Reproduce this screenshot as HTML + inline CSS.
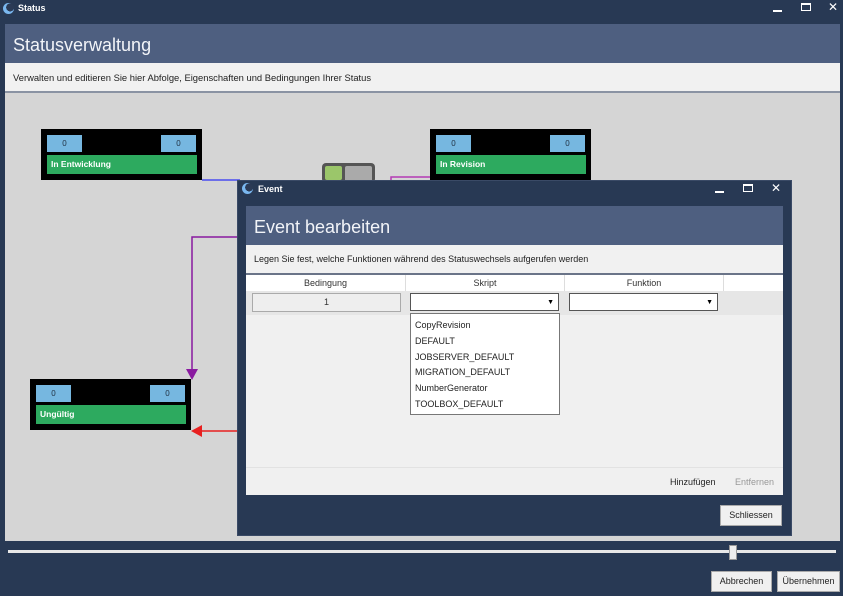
<!DOCTYPE html>
<html><head><meta charset="utf-8"><style>
*{box-sizing:border-box;margin:0;padding:0}
body{width:843px;height:596px;background:#283954;font-family:"Liberation Sans",sans-serif;position:relative;overflow:hidden;font-size:9px}
.a{position:absolute}
.node{position:absolute;background:#000;width:161px;height:51px}
.num{position:absolute;background:#76b7e0;width:35px;height:17px;font-size:8px;text-align:center;line-height:17px;color:#234}
.grn{position:absolute;background:#2daa5f;color:#fff;font-weight:bold;font-size:8.5px;line-height:19px;padding-left:4px;height:19px;width:150px}
.btn{position:absolute;background:#f0f0f0;border:1px solid #aaa;font-size:9px;text-align:center;line-height:19px;color:#222}
.hdr{position:absolute;background:#4e5f80;color:#f2f4f8;font-size:18px}
.ctl{position:absolute;color:#fff;font-size:12px}
</style></head><body>
<div class="a" style="left:3px;top:3px;width:11px;height:11px;border-radius:50%;background:radial-gradient(circle at 65% 40%,#2b3a55 40%,#7ab8f0 42%)"></div>
<div class="a" style="left:18px;top:3px;color:#fff;font-weight:bold;font-size:9px">Status</div>
<div class="a" style="left:773px;top:10px;width:9px;height:2px;background:#fff"></div>
<div class="a" style="left:801px;top:3px;width:10px;height:8px;border:1px solid #fff;border-top-width:2px"></div>
<div class="ctl" style="left:828px;top:0px">✕</div>

<div class="hdr" style="left:5px;top:24px;width:835px;height:39px;padding:11px 0 0 8px">Statusverwaltung</div>
<div class="a" style="left:5px;top:63px;width:835px;height:30px;background:#f1f1f1;border-bottom:2px solid #8a93a3;padding:9px 0 0 8px;color:#222;font-size:9.4px">Verwalten und editieren Sie hier Abfolge, Eigenschaften und Bedingungen Ihrer Status</div>
<div class="a" style="left:5px;top:93px;width:835px;height:448px;background:#d5d5d5"></div>

<svg class="a" style="left:0;top:0" width="843" height="596">
<line x1="202" y1="180" x2="240" y2="180" stroke="#4a4cf0" stroke-width="1.5"/>
<polyline points="391,190 391,177 430,177" fill="none" stroke="#b43ab4" stroke-width="1.5"/>
<polyline points="240,237 192,237 192,372" fill="none" stroke="#8a1aa0" stroke-width="1.5"/>
<polygon points="186,369 198,369 192,380" fill="#8a1aa0"/>
<line x1="200" y1="431" x2="240" y2="431" stroke="#e82020" stroke-width="1.5"/>
<polygon points="191,431 202,425 202,437" fill="#e82020"/>
<rect x="322" y="163" width="53" height="20" rx="4" fill="#555"/>
<rect x="325" y="166" width="17" height="14" rx="2" fill="#9bc66a"/>
<rect x="345" y="166" width="27" height="16" rx="2" fill="#aaa"/>
</svg>

<div class="node" style="left:41px;top:129px"><div class="num" style="left:6px;top:6px">0</div><div class="num" style="left:120px;top:6px">0</div><div class="grn" style="left:6px;top:26px">In Entwicklung</div></div>
<div class="node" style="left:430px;top:129px"><div class="num" style="left:6px;top:6px">0</div><div class="num" style="left:120px;top:6px">0</div><div class="grn" style="left:6px;top:26px">In Revision</div></div>
<div class="node" style="left:30px;top:379px"><div class="num" style="left:6px;top:6px">0</div><div class="num" style="left:120px;top:6px">0</div><div class="grn" style="left:6px;top:26px">Ungültig</div></div>

<div class="a" style="left:237px;top:180px;width:555px;height:356px;background:#283954;border:1px solid #3a4a66"></div>
<div class="a" style="left:242px;top:183px;width:11px;height:11px;border-radius:50%;background:radial-gradient(circle at 65% 40%,#2b3a55 40%,#7ab8f0 42%)"></div>
<div class="a" style="left:258px;top:184px;color:#fff;font-weight:bold;font-size:9px">Event</div>
<div class="a" style="left:715px;top:191px;width:9px;height:2px;background:#fff"></div>
<div class="a" style="left:743px;top:184px;width:10px;height:8px;border:1px solid #fff;border-top-width:2px"></div>
<div class="ctl" style="left:771px;top:181px">✕</div>
<div class="hdr" style="left:246px;top:206px;width:537px;height:39px;padding:11px 0 0 8px">Event bearbeiten</div>
<div class="a" style="left:246px;top:245px;width:537px;height:30px;background:#f1f1f1;border-bottom:2px solid #6a7488;padding:9px 0 0 8px;color:#222">Legen Sie fest, welche Funktionen während des Statuswechsels aufgerufen werden</div>
<div class="a" style="left:246px;top:275px;width:537px;height:220px;background:#f0f0f0"></div>
<div class="a" style="left:246px;top:275px;width:537px;height:16px;background:#fff;color:#333;line-height:16px">
<span class="a" style="left:0;width:160px;text-align:center;border-right:1px solid #ddd">Bedingung</span>
<span class="a" style="left:160px;width:159px;text-align:center;border-right:1px solid #ddd">Skript</span>
<span class="a" style="left:319px;width:159px;text-align:center;border-right:1px solid #ddd">Funktion</span></div>
<div class="a" style="left:246px;top:291px;width:537px;height:24px;background:#e6e6e6"></div>
<div class="a" style="left:252px;top:293px;width:149px;height:19px;background:#eee;border:1px solid #aaa;text-align:center;line-height:17px;color:#333">1</div>
<div class="a" style="left:410px;top:293px;width:149px;height:18px;background:#fff;border:1px solid #555;text-align:right;padding-right:4px;font-size:7px;line-height:17px">▼</div>
<div class="a" style="left:569px;top:293px;width:149px;height:18px;background:#fff;border:1px solid #555;text-align:right;padding-right:4px;font-size:7px;line-height:17px">▼</div>
<div class="a" style="left:410px;top:313px;width:150px;height:102px;background:#fff;border:1px solid #777;padding:4px 0 0 4px;line-height:15.8px;color:#222">CopyRevision<br>DEFAULT<br>JOBSERVER_DEFAULT<br>MIGRATION_DEFAULT<br>NumberGenerator<br>TOOLBOX_DEFAULT</div>
<div class="a" style="left:246px;top:467px;width:537px;height:1px;background:#e2e2e2"></div>
<div class="a" style="left:670px;top:477px;color:#222">Hinzufügen</div>
<div class="a" style="left:735px;top:477px;color:#999">Entfernen</div>
<div class="btn" style="left:720px;top:505px;width:62px;height:21px">Schliessen</div>

<div class="a" style="left:8px;top:550px;width:828px;height:3px;background:#e8e8e8"></div>
<div class="a" style="left:729px;top:545px;width:8px;height:15px;background:#eee;border:1px solid #999"></div>
<div class="btn" style="left:711px;top:571px;width:61px;height:21px">Abbrechen</div>
<div class="btn" style="left:777px;top:571px;width:63px;height:21px">Übernehmen</div>
</body></html>
